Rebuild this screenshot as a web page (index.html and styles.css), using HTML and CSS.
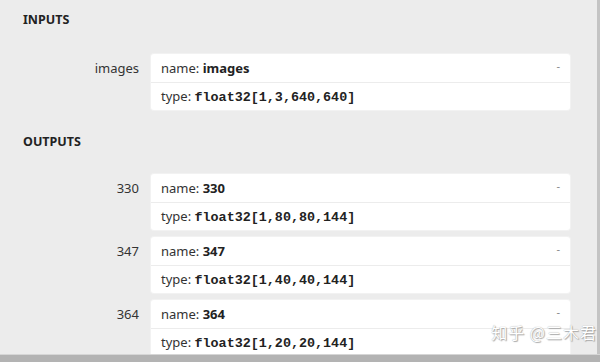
FILE: index.html
```html
<!DOCTYPE html>
<html lang="zh">
<head>
<meta charset="utf-8">
<title>Model Properties</title>
<link rel="stylesheet" href="styles.css">
</head>
<body>
<div class="frame">
  <div class="sidebar">
    <div class="section-title">INPUTS</div>
    <div class="entry">
      <div class="entry-name">images</div>
      <div class="card">
        <div class="row">name: <b>images</b><span class="toggle">-</span></div>
        <div class="row">type: <code>float32[1,3,640,640]</code></div>
      </div>
    </div>

    <div class="section-title outputs">OUTPUTS</div>
    <div class="entry">
      <div class="entry-name">330</div>
      <div class="card">
        <div class="row">name: <b>330</b><span class="toggle">-</span></div>
        <div class="row">type: <code>float32[1,80,80,144]</code></div>
      </div>
    </div>
    <div class="entry">
      <div class="entry-name">347</div>
      <div class="card">
        <div class="row">name: <b>347</b><span class="toggle">-</span></div>
        <div class="row">type: <code>float32[1,40,40,144]</code></div>
      </div>
    </div>
    <div class="entry">
      <div class="entry-name">364</div>
      <div class="card">
        <div class="row">name: <b>364</b><span class="toggle">-</span></div>
        <div class="row">type: <code>float32[1,20,20,144]</code></div>
      </div>
    </div>
    <div class="watermark">知乎 @三木君</div>
  </div>
  <div class="edge"></div>
</div>
<div class="bottom-bar"></div>
</body>
</html>
```

FILE: styles.css
```css
html {
  height: 100%;
}
body {
  margin: 0;
  height: 100%;
  display: flex;
  flex-direction: column;
  background: #ececec;
  color: #333;
  font-family: "Noto Sans", "Open Sans", sans-serif;
  font-size: 13px;
  overflow: hidden;
}

.frame {
  flex: 1;
  display: flex;
  min-height: 0;
}

.sidebar {
  flex: 1;
  position: relative;
  overflow: hidden;
  padding: 10px 27px 0 23px;
}

.edge {
  width: 3px;
  background: #c4c4c4;
}

.bottom-bar {
  height: 7px;
  background: #b3b3b3;
  border-top: 1px solid #d6d6d6;
}

.section-title {
  font-weight: bold;
  font-size: 12.5px;
  color: #222;
  line-height: 20px;
  margin-bottom: 24px;
}
.section-title.outputs {
  margin-top: 22px;
  margin-bottom: 22px;
}

.entry {
  display: flex;
  gap: 12px;
  margin-bottom: 7px;
}

.entry-name {
  width: 116px;
  text-align: right;
  line-height: 28px;
  color: #333;
}

.card {
  flex: 1;
  background: #fff;
  border-radius: 3px;
  box-shadow: 0 0 0 1px #f2f2f2;
}

.row {
  position: relative;
  height: 28px;
  line-height: 28px;
  padding: 0 10px;
  white-space: nowrap;
}
.row + .row {
  height: 27px;
  line-height: 27px;
  border-top: 1px solid #ececec;
}

.row b {
  color: #222;
}

code {
  font-family: "Liberation Mono", "DejaVu Sans Mono", monospace;
  font-size: 13.4px;
  font-weight: bold;
  color: #222;
}

.toggle {
  position: absolute;
  right: 10px;
  top: -2px;
  color: #888;
  font-size: 11px;
}

.watermark {
  position: absolute;
  right: 0;
  bottom: 10px;
  font-family: "Noto Sans CJK SC", sans-serif;
  font-size: 16px;
  color: #fff;
  letter-spacing: 1px;
  text-shadow: 0 0 1px #999, 1px 1px 1px #aaa;
}
```
